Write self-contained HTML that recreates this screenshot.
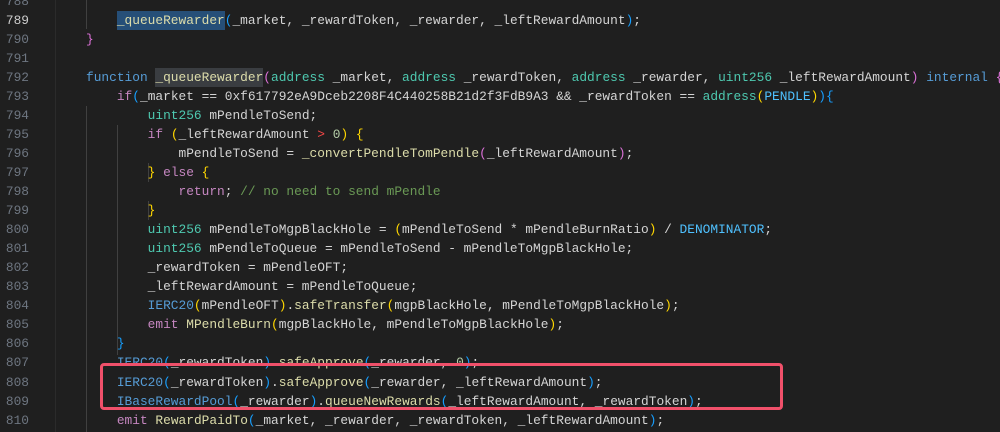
<!DOCTYPE html>
<html><head><meta charset="utf-8"><style>
body{margin:0;width:1000px;height:432px;background:#1f1f1f;overflow:hidden;position:relative;font-family:"Liberation Mono",monospace;font-size:12.85px;}
.ln{position:absolute;left:0;width:29px;text-align:right;color:#6e7681;height:19.05px;line-height:19.05px;}
.c{position:absolute;left:86px;white-space:pre;color:#d4d4d4;height:19.05px;line-height:19.05px;}
.g{position:absolute;width:1px;background:#404040;}
.k{color:#569cd6}.p{color:#c586c0}.f{color:#dcdcaa}.t{color:#4ec9b0}.n{color:#b5cea8}.cm{color:#6a9955}.cn{color:#4fc1ff}.b{color:#569cd6}
.y{color:#ffd700}.o{color:#da70d6}.u{color:#179fff}.r{color:#f44747}
</style></head><body>
<div class="g" style="left:55px;top:0;height:432px;background:#2b2b2b"></div>
<div class="g" style="left:86px;top:0;height:29px;"></div>
<div class="g" style="left:86px;top:106px;height:326px;"></div>
<div class="g" style="left:117px;top:125px;height:230px;"></div>
<div class="g" style="left:148px;top:163px;height:19px;"></div>
<div class="g" style="left:148px;top:201px;height:19px;"></div>
<div style="position:absolute;left:117px;top:11px;width:108px;height:19px;background:#264f78"></div>
<div style="position:absolute;left:155px;top:68px;width:108px;height:19px;background:#3a3d41"></div>

<div class="ln" style="top:-8.5px">788</div>
<div class="ln" style="top:10.55px;color:#cccccc">789</div>
<div class="ln" style="top:29.6px">790</div>
<div class="ln" style="top:48.65px">791</div>
<div class="ln" style="top:67.7px">792</div>
<div class="ln" style="top:86.75px">793</div>
<div class="ln" style="top:105.8px">794</div>
<div class="ln" style="top:124.85px">795</div>
<div class="ln" style="top:143.9px">796</div>
<div class="ln" style="top:162.95px">797</div>
<div class="ln" style="top:182px">798</div>
<div class="ln" style="top:201.05px">799</div>
<div class="ln" style="top:220.1px">800</div>
<div class="ln" style="top:239.15px">801</div>
<div class="ln" style="top:258.2px">802</div>
<div class="ln" style="top:277.25px">803</div>
<div class="ln" style="top:296.3px">804</div>
<div class="ln" style="top:315.35px">805</div>
<div class="ln" style="top:334.4px">806</div>
<div class="ln" style="top:353.45px">807</div>
<div class="ln" style="top:372.5px">808</div>
<div class="ln" style="top:391.55px">809</div>
<div class="ln" style="top:410.6px">810</div>

<div class="c" style="top:10.55px">    <span class="f">_queueRewarder</span><span class="u">(</span>_market, _rewardToken, _rewarder, _leftRewardAmount<span class="u">)</span>;</div>
<div class="c" style="top:29.6px"><span class="o">}</span></div>
<div class="c" style="top:67.7px"><span class="k">function</span> <span class="f">_queueRewarder</span><span class="o">(</span><span class="t">address</span> _market, <span class="t">address</span> _rewardToken, <span class="t">address</span> _rewarder, <span class="t">uint256</span> _leftRewardAmount<span class="o">)</span> <span class="k">internal</span> <span class="o">{</span></div>
<div class="c" style="top:86.75px">    <span class="p">if</span><span class="u">(</span>_market == 0xf617792eA9Dceb2208F4C440258B21d2f3FdB9A3 &amp;&amp; _rewardToken == <span class="t">address</span><span class="y">(</span><span class="cn">PENDLE</span><span class="y">)</span><span class="u">){</span></div>
<div class="c" style="top:105.8px">        <span class="t">uint256</span> mPendleToSend;</div>
<div class="c" style="top:124.85px">        <span class="p">if</span> <span class="y">(</span>_leftRewardAmount <span class="r">&gt;</span> <span class="n">0</span><span class="y">)</span> <span class="y">{</span></div>
<div class="c" style="top:143.9px">            mPendleToSend = <span class="f">_convertPendleTomPendle</span><span class="o">(</span>_leftRewardAmount<span class="o">)</span>;</div>
<div class="c" style="top:162.95px">        <span class="y">}</span> <span class="p">else</span> <span class="y">{</span></div>
<div class="c" style="top:182px">            <span class="p">return</span>; <span class="cm">// no need to send mPendle</span></div>
<div class="c" style="top:201.05px">        <span class="y">}</span></div>
<div class="c" style="top:220.1px">        <span class="t">uint256</span> mPendleToMgpBlackHole = <span class="y">(</span>mPendleToSend * mPendleBurnRatio<span class="y">)</span> / <span class="cn">DENOMINATOR</span>;</div>
<div class="c" style="top:239.15px">        <span class="t">uint256</span> mPendleToQueue = mPendleToSend - mPendleToMgpBlackHole;</div>
<div class="c" style="top:258.2px">        _rewardToken = mPendleOFT;</div>
<div class="c" style="top:277.25px">        _leftRewardAmount = mPendleToQueue;</div>
<div class="c" style="top:296.3px">        <span class="b">IERC20</span><span class="y">(</span>mPendleOFT<span class="y">)</span>.<span class="f">safeTransfer</span><span class="y">(</span>mgpBlackHole, mPendleToMgpBlackHole<span class="y">)</span>;</div>
<div class="c" style="top:315.35px">        <span class="p">emit</span> <span class="f">MPendleBurn</span><span class="y">(</span>mgpBlackHole, mPendleToMgpBlackHole<span class="y">)</span>;</div>
<div class="c" style="top:334.4px">    <span class="u">}</span></div>
<div class="c" style="top:353.45px">    <span class="b">IERC20</span><span class="u">(</span>_rewardToken<span class="u">)</span>.<span class="f">safeApprove</span><span class="u">(</span>_rewarder, <span class="n">0</span><span class="u">)</span>;</div>
<div class="c" style="top:372.5px">    <span class="b">IERC20</span><span class="u">(</span>_rewardToken<span class="u">)</span>.<span class="f">safeApprove</span><span class="u">(</span>_rewarder, _leftRewardAmount<span class="u">)</span>;</div>
<div class="c" style="top:391.55px">    <span class="b">IBaseRewardPool</span><span class="u">(</span>_rewarder<span class="u">)</span>.<span class="f">queueNewRewards</span><span class="u">(</span>_leftRewardAmount, _rewardToken<span class="u">)</span>;</div>
<div class="c" style="top:410.6px">    <span class="p">emit</span> <span class="f">RewardPaidTo</span><span class="u">(</span>_market, _rewarder, _rewardToken, _leftRewardAmount<span class="u">)</span>;</div>

<div style="position:absolute;left:100px;top:363px;width:677px;height:41px;border:3px solid #f0506a;border-radius:4px"></div>
</body></html>
